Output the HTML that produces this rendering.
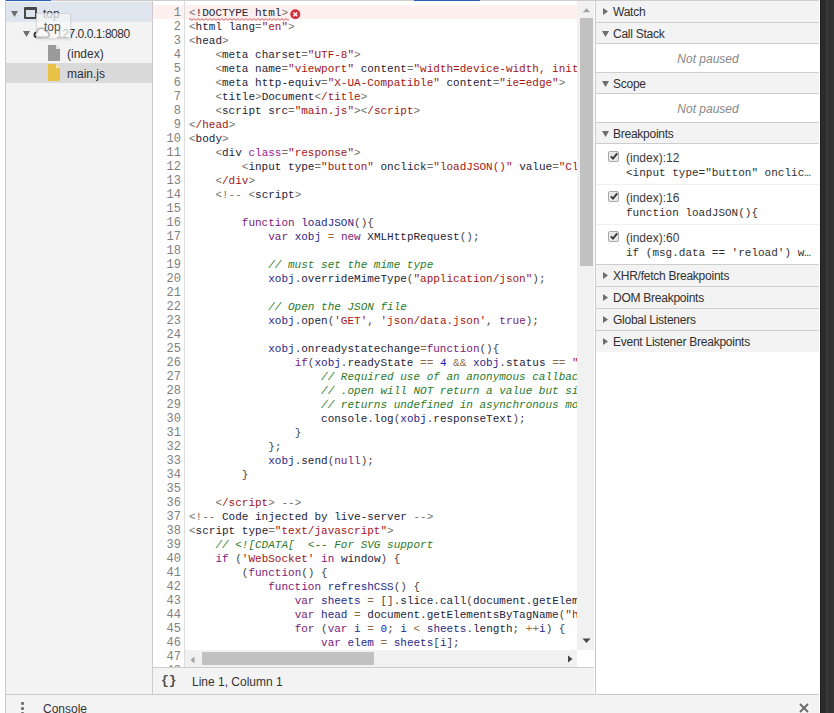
<!DOCTYPE html>
<html><head><meta charset="utf-8"><style>
html,body{margin:0;padding:0;}
body{width:834px;height:713px;overflow:hidden;position:relative;background:#fff;font-family:"Liberation Sans",sans-serif;font-size:12px;color:#222;}
.abs{position:absolute;}
.ui{position:absolute;white-space:nowrap;font-family:"Liberation Sans",sans-serif;font-size:12px;color:#303030;line-height:14px;}
/* code */
#editor{position:absolute;left:153px;top:1px;width:427px;height:666px;overflow:hidden;background:#fff;}
.cl{position:absolute;left:36px;height:14px;line-height:14px;white-space:pre;font-family:"Liberation Mono",monospace;font-size:11px;color:#222;}
.gn{position:absolute;left:0;width:28px;text-align:right;height:14px;line-height:14px;font-family:"Liberation Mono",monospace;font-size:12px;color:#808080;}
.b{color:#6f6f68}
.t{color:#24243a}
.s{color:#a31515}
.r{color:#a31515}
.p{color:#9b1b8f}
.k{color:#7b1a7b}
.c{color:#2a7a2a;font-style:italic}
.v{color:#27278a}
.o{color:#8f6a45}
.j{color:#444}
.n{color:#1c1ccf}
.tri-r{position:absolute;width:5px;height:7px;background:#6e6e6e;clip-path:polygon(0 0,100% 50%,0 100%);}
.tri-d{position:absolute;width:7px;height:6px;background:#6e6e6e;clip-path:polygon(0 0,100% 0,50% 100%);}
.hdr{position:absolute;left:596px;width:224px;height:21px;background:#f3f3f3;border-bottom:1px solid #cdcdcd;}
.hdr .ui{left:17px;top:4px;letter-spacing:-0.25px;}
.np{position:absolute;left:596px;width:224px;text-align:center;font-style:italic;color:#888;}

</style></head><body>
<!-- left white strip and border -->
<div class="abs" style="left:5px;top:0;width:1px;height:713px;background:#cbcbcb"></div>
<!-- navigator -->
<div class="abs" style="left:6px;top:1px;width:146px;height:693px;background:#f3f3f3"></div>
<div class="abs" style="left:152px;top:0;width:1px;height:694px;background:#cbcbcb"></div>
<div class="abs" style="left:6px;top:2px;width:146px;height:20px;background:#dfe5ee"></div>
<div class="abs" style="left:6px;top:63px;width:146px;height:20px;background:#dadada"></div>
<div class="tri-d" style="left:11px;top:11px"></div>
<div class="abs" style="left:24px;top:7px;width:9px;height:7px;border:2px solid #474747;border-top-width:3px;border-radius:1px"></div>
<div class="ui" style="left:43px;top:7px">top</div>
<div class="tri-d" style="left:23px;top:31px"></div>
<svg class="abs" style="left:32px;top:25px" width="20" height="14" viewBox="0 0 20 14"><path d="M5 12.3 C1.8 12.3 1.5 7.6 4.8 7.3 C5.5 2.5 12 1.5 13.5 5.8 C17.5 5.8 18.5 12.3 15 12.3 Z" fill="none" stroke="#333" stroke-width="1.8"/></svg>
<div class="ui" style="left:56px;top:27px;letter-spacing:-0.45px">127.0.0.1:8080</div>
<svg class="abs" style="left:48px;top:45px" width="12" height="16" viewBox="0 0 12 16"><path d="M0 0 H8 L12 4 V16 H0 Z" fill="#9a9a9a"/><path d="M8 0 V4 H12 Z" fill="#e8e8e8"/></svg>
<div class="ui" style="left:67px;top:47px">(index)</div>
<svg class="abs" style="left:48px;top:64px" width="12" height="17" viewBox="0 0 12 17"><path d="M0 0 H8 L12 4 V17 H0 Z" fill="#e9c348"/><path d="M8 0 V4 H12 Z" fill="#f6e9b8"/></svg>
<div class="ui" style="left:67px;top:67px">main.js</div>
<!-- tooltip -->
<div class="abs" style="left:36px;top:13px;width:33px;height:24px;background:rgba(248,248,248,0.7);border:1px solid rgba(180,180,180,0.45);box-shadow:0 1px 2px rgba(0,0,0,0.08)"></div>
<div class="ui" style="left:44px;top:20px;color:#505050">top</div>

<!-- top line -->
<div class="abs" style="left:6px;top:0;width:814px;height:1px;background:#cdcdcd"></div>
<div class="abs" style="left:6px;top:0;width:45px;height:1px;background:#2f5fb8"></div>
<div class="abs" style="left:414px;top:0;width:66px;height:1px;background:#2f5fb8"></div>

<!-- editor -->
<div id="editor">
<div class="abs" style="left:0;top:4px;width:427px;height:14px;background:#fff0f0"></div>
<div class="abs" style="left:31px;top:0;width:1px;height:666px;background:#dcdcdc"></div>
<div class="gn" style="top:5px">1</div>
<div class="gn" style="top:19px">2</div>
<div class="gn" style="top:33px">3</div>
<div class="gn" style="top:47px">4</div>
<div class="gn" style="top:61px">5</div>
<div class="gn" style="top:75px">6</div>
<div class="gn" style="top:89px">7</div>
<div class="gn" style="top:103px">8</div>
<div class="gn" style="top:117px">9</div>
<div class="gn" style="top:131px">10</div>
<div class="gn" style="top:145px">11</div>
<div class="gn" style="top:159px">12</div>
<div class="gn" style="top:173px">13</div>
<div class="gn" style="top:187px">14</div>
<div class="gn" style="top:201px">15</div>
<div class="gn" style="top:215px">16</div>
<div class="gn" style="top:229px">17</div>
<div class="gn" style="top:243px">18</div>
<div class="gn" style="top:257px">19</div>
<div class="gn" style="top:271px">20</div>
<div class="gn" style="top:285px">21</div>
<div class="gn" style="top:299px">22</div>
<div class="gn" style="top:313px">23</div>
<div class="gn" style="top:327px">24</div>
<div class="gn" style="top:341px">25</div>
<div class="gn" style="top:355px">26</div>
<div class="gn" style="top:369px">27</div>
<div class="gn" style="top:383px">28</div>
<div class="gn" style="top:397px">29</div>
<div class="gn" style="top:411px">30</div>
<div class="gn" style="top:425px">31</div>
<div class="gn" style="top:439px">32</div>
<div class="gn" style="top:453px">33</div>
<div class="gn" style="top:467px">34</div>
<div class="gn" style="top:481px">35</div>
<div class="gn" style="top:495px">36</div>
<div class="gn" style="top:509px">37</div>
<div class="gn" style="top:523px">38</div>
<div class="gn" style="top:537px">39</div>
<div class="gn" style="top:551px">40</div>
<div class="gn" style="top:565px">41</div>
<div class="gn" style="top:579px">42</div>
<div class="gn" style="top:593px">43</div>
<div class="gn" style="top:607px">44</div>
<div class="gn" style="top:621px">45</div>
<div class="gn" style="top:635px">46</div>
<div class="gn" style="top:649px">47</div>
<div class="gn" style="top:663px">48</div>
<div class="cl" style="top:5px"><span class="b">&lt;</span><span class="t">!DOCTYPE html</span><span class="b">&gt;</span></div>
<div class="cl" style="top:19px"><span class="b">&lt;</span><span class="t">html</span> <span class="t">lang</span><span class="b">=</span><span class="s">&quot;en&quot;</span><span class="b">&gt;</span></div>
<div class="cl" style="top:33px"><span class="b">&lt;</span><span class="t">head</span><span class="b">&gt;</span></div>
<div class="cl" style="top:47px">    <span class="b">&lt;</span><span class="t">meta</span> <span class="t">charset</span><span class="b">=</span><span class="s">&quot;UTF-8&quot;</span><span class="b">&gt;</span></div>
<div class="cl" style="top:61px">    <span class="b">&lt;</span><span class="t">meta</span> <span class="t">name</span><span class="b">=</span><span class="s">&quot;viewport&quot;</span> <span class="t">content</span><span class="b">=</span><span class="s">&quot;width=device-width, initial-scale=1.0&quot;</span><span class="b">&gt;</span></div>
<div class="cl" style="top:75px">    <span class="b">&lt;</span><span class="t">meta</span> <span class="t">http-equiv</span><span class="b">=</span><span class="s">&quot;X-UA-Compatible&quot;</span> <span class="t">content</span><span class="b">=</span><span class="s">&quot;ie=edge&quot;</span><span class="b">&gt;</span></div>
<div class="cl" style="top:89px">    <span class="b">&lt;</span><span class="t">title</span><span class="b">&gt;</span><span class="t">Document</span><span class="b">&lt;</span><span class="r">/title</span><span class="b">&gt;</span></div>
<div class="cl" style="top:103px">    <span class="b">&lt;</span><span class="t">script</span> <span class="t">src</span><span class="b">=</span><span class="s">&quot;main.js&quot;</span><span class="b">&gt;&lt;</span><span class="r">/script</span><span class="b">&gt;</span></div>
<div class="cl" style="top:117px"><span class="b">&lt;</span><span class="r">/head</span><span class="b">&gt;</span></div>
<div class="cl" style="top:131px"><span class="b">&lt;</span><span class="t">body</span><span class="b">&gt;</span></div>
<div class="cl" style="top:145px">    <span class="b">&lt;</span><span class="t">div</span> <span class="p">class</span><span class="b">=</span><span class="s">&quot;response&quot;</span><span class="b">&gt;</span></div>
<div class="cl" style="top:159px">        <span class="b">&lt;</span><span class="t">input</span> <span class="t">type</span><span class="b">=</span><span class="s">&quot;button&quot;</span> <span class="t">onclick</span><span class="b">=</span><span class="s">&quot;loadJSON()&quot;</span> <span class="t">value</span><span class="b">=</span><span class="s">&quot;Click me&quot;</span><span class="b">&gt;</span></div>
<div class="cl" style="top:173px">    <span class="b">&lt;</span><span class="r">/div</span><span class="b">&gt;</span></div>
<div class="cl" style="top:187px">    <span class="b">&lt;!--</span> <span class="b">&lt;</span><span class="t">script</span><span class="b">&gt;</span></div>
<div class="cl" style="top:201px"></div>
<div class="cl" style="top:215px">        <span class="k">function</span> <span class="v">loadJSON</span><span class="j">(){</span></div>
<div class="cl" style="top:229px">            <span class="k">var</span> <span class="v">xobj</span> <span class="o">=</span> <span class="k">new</span> <span class="t">XMLHttpRequest</span><span class="j">();</span></div>
<div class="cl" style="top:243px"></div>
<div class="cl" style="top:257px">            <span class="c">// must set the mime type</span></div>
<div class="cl" style="top:271px">            <span class="v">xobj</span><span class="j">.</span><span class="t">overrideMimeType</span><span class="j">(</span><span class="s">&quot;application/json&quot;</span><span class="j">);</span></div>
<div class="cl" style="top:285px"></div>
<div class="cl" style="top:299px">            <span class="c">// Open the JSON file</span></div>
<div class="cl" style="top:313px">            <span class="v">xobj</span><span class="j">.</span><span class="t">open</span><span class="j">(</span><span class="s">&#x27;GET&#x27;</span><span class="j">,</span> <span class="s">&#x27;json/data.json&#x27;</span><span class="j">,</span> <span class="k">true</span><span class="j">);</span></div>
<div class="cl" style="top:327px"></div>
<div class="cl" style="top:341px">            <span class="v">xobj</span><span class="j">.</span><span class="t">onreadystatechange</span><span class="o">=</span><span class="k">function</span><span class="j">(){</span></div>
<div class="cl" style="top:355px">                <span class="k">if</span><span class="j">(</span><span class="v">xobj</span><span class="j">.</span><span class="t">readyState</span> <span class="o">==</span> <span class="n">4</span> <span class="o">&amp;&amp;</span> <span class="v">xobj</span><span class="j">.</span><span class="t">status</span> <span class="o">==</span> <span class="s">&quot;200&quot;</span><span class="j">) {</span></div>
<div class="cl" style="top:369px">                    <span class="c">// Required use of an anonymous callback as .open will</span></div>
<div class="cl" style="top:383px">                    <span class="c">// .open will NOT return a value but simply returns</span></div>
<div class="cl" style="top:397px">                    <span class="c">// returns undefined in asynchronous mode</span></div>
<div class="cl" style="top:411px">                    <span class="t">console</span><span class="j">.</span><span class="t">log</span><span class="j">(</span><span class="v">xobj</span><span class="j">.</span><span class="t">responseText</span><span class="j">);</span></div>
<div class="cl" style="top:425px">                <span class="j">}</span></div>
<div class="cl" style="top:439px">            <span class="j">};</span></div>
<div class="cl" style="top:453px">            <span class="v">xobj</span><span class="j">.</span><span class="t">send</span><span class="j">(</span><span class="k">null</span><span class="j">);</span></div>
<div class="cl" style="top:467px">        <span class="j">}</span></div>
<div class="cl" style="top:481px"></div>
<div class="cl" style="top:495px">    <span class="b">&lt;</span><span class="r">/script</span><span class="b">&gt;</span> <span class="b">--&gt;</span></div>
<div class="cl" style="top:509px"><span class="b">&lt;!--</span> <span class="t">Code injected by live-server</span> <span class="b">--&gt;</span></div>
<div class="cl" style="top:523px"><span class="b">&lt;</span><span class="t">script</span> <span class="t">type</span><span class="b">=</span><span class="s">&quot;text/javascript&quot;</span><span class="b">&gt;</span></div>
<div class="cl" style="top:537px">    <span class="c">// &lt;![CDATA[  &lt;-- For SVG support</span></div>
<div class="cl" style="top:551px">    <span class="k">if</span> <span class="j">(</span><span class="s">&#x27;WebSocket&#x27;</span> <span class="k">in</span> <span class="t">window</span><span class="j">) {</span></div>
<div class="cl" style="top:565px">        <span class="j">(</span><span class="k">function</span><span class="j">() {</span></div>
<div class="cl" style="top:579px">            <span class="k">function</span> <span class="v">refreshCSS</span><span class="j">() {</span></div>
<div class="cl" style="top:593px">                <span class="k">var</span> <span class="v">sheets</span> <span class="o">=</span> <span class="j">[].</span><span class="t">slice</span><span class="j">.</span><span class="t">call</span><span class="j">(</span><span class="t">document</span><span class="j">.</span><span class="t">getElementsByTagName</span></div>
<div class="cl" style="top:607px">                <span class="k">var</span> <span class="v">head</span> <span class="o">=</span> <span class="t">document</span><span class="j">.</span><span class="t">getElementsByTagName</span><span class="j">(</span><span class="s">&quot;head&quot;</span></div>
<div class="cl" style="top:621px">                <span class="k">for</span> <span class="j">(</span><span class="k">var</span> <span class="v">i</span> <span class="o">=</span> <span class="n">0</span><span class="j">;</span> <span class="v">i</span> <span class="o">&lt;</span> <span class="v">sheets</span><span class="j">.</span><span class="t">length</span><span class="j">;</span> <span class="o">++</span><span class="v">i</span><span class="j">) {</span></div>
<div class="cl" style="top:635px">                    <span class="k">var</span> <span class="v">elem</span> <span class="o">=</span> <span class="v">sheets</span><span class="j">[</span><span class="v">i</span><span class="j">];</span></div>
<div class="cl" style="top:649px"></div>
<div class="cl" style="top:663px"></div>
<svg class="abs" style="left:36px;top:16px" width="100" height="5" viewBox="0 0 100 5"><path d="M0 2.5 Q1.0 0.8 2.0 2.5 Q3.0 4.2 4.0 2.5 Q5.0 0.8 6.0 2.5 Q7.0 4.2 8.0 2.5 Q9.0 0.8 10.0 2.5 Q11.0 4.2 12.0 2.5 Q13.0 0.8 14.0 2.5 Q15.0 4.2 16.0 2.5 Q17.0 0.8 18.0 2.5 Q19.0 4.2 20.0 2.5 Q21.0 0.8 22.0 2.5 Q23.0 4.2 24.0 2.5 Q25.0 0.8 26.0 2.5 Q27.0 4.2 28.0 2.5 Q29.0 0.8 30.0 2.5 Q31.0 4.2 32.0 2.5 Q33.0 0.8 34.0 2.5 Q35.0 4.2 36.0 2.5 Q37.0 0.8 38.0 2.5 Q39.0 4.2 40.0 2.5 Q41.0 0.8 42.0 2.5 Q43.0 4.2 44.0 2.5 Q45.0 0.8 46.0 2.5 Q47.0 4.2 48.0 2.5 Q49.0 0.8 50.0 2.5 Q51.0 4.2 52.0 2.5 Q53.0 0.8 54.0 2.5 Q55.0 4.2 56.0 2.5 Q57.0 0.8 58.0 2.5 Q59.0 4.2 60.0 2.5 Q61.0 0.8 62.0 2.5 Q63.0 4.2 64.0 2.5 Q65.0 0.8 66.0 2.5 Q67.0 4.2 68.0 2.5 Q69.0 0.8 70.0 2.5 Q71.0 4.2 72.0 2.5 Q73.0 0.8 74.0 2.5 Q75.0 4.2 76.0 2.5 Q77.0 0.8 78.0 2.5 Q79.0 4.2 80.0 2.5 Q81.0 0.8 82.0 2.5 Q83.0 4.2 84.0 2.5 Q85.0 0.8 86.0 2.5 Q87.0 4.2 88.0 2.5 Q89.0 0.8 90.0 2.5 Q91.0 4.2 92.0 2.5 Q93.0 0.8 94.0 2.5 Q95.0 4.2 96.0 2.5 Q97.0 0.8 98.0 2.5 Q99.0 4.2 100.0 2.5" fill="none" stroke="#e05555" stroke-width="1"/></svg>
<svg class="abs" style="left:137px;top:8px" width="11" height="11" viewBox="0 0 11 11"><circle cx="5.3" cy="5.3" r="5" fill="#d6303c"/><path d="M3.4 3.4 L7.2 7.2 M7.2 3.4 L3.4 7.2" stroke="#fff" stroke-width="1.4"/></svg>
<!-- horizontal scrollbar -->
<div class="abs" style="left:32px;top:649px;width:395px;height:17px;background:#f1f1f1"></div>
<div class="abs" style="left:49px;top:651px;width:172px;height:13px;background:#c1c1c1"></div>
<svg class="abs" style="left:37px;top:655px" width="5" height="8" viewBox="0 0 5 8"><path d="M4.5 0.5 V7.5 L0.5 4 Z" fill="#a3a3a3"/></svg>
<svg class="abs" style="left:415px;top:654px" width="5" height="8" viewBox="0 0 5 8"><path d="M0 0.5 V7.5 L4.5 4 Z" fill="#454545"/></svg>
</div>
<!-- vertical scrollbar -->
<div class="abs" style="left:577px;top:1px;width:17px;height:650px;background:#f1f1f1"></div>
<div class="abs" style="left:580px;top:18px;width:13px;height:248px;background:#c1c1c1"></div>
<svg class="abs" style="left:582px;top:8px" width="9" height="5" viewBox="0 0 9 5"><path d="M0.8 4.2 H8.2 L4.5 0.3 Z" fill="#a3a3a3"/></svg>
<svg class="abs" style="left:582px;top:638px" width="9" height="6" viewBox="0 0 9 6"><path d="M0.5 0.5 H8.5 L4.5 5 Z" fill="#454545"/></svg>
<div class="abs" style="left:577px;top:650px;width:17px;height:17px;background:#fff"></div>

<!-- status bar -->
<div class="abs" style="left:153px;top:667px;width:441px;height:1px;background:#cdcdcd"></div>
<div class="abs" style="left:153px;top:668px;width:441px;height:26px;background:#f3f3f3"></div>
<div class="ui" style="left:161px;top:674px;font-family:'Liberation Mono',monospace;font-weight:bold;font-size:13px;color:#4d4d4d">{}</div>
<div class="ui" style="left:192px;top:675px;color:#333">Line 1, Column 1</div>

<!-- sidebar -->
<div class="abs" style="left:595px;top:0;width:1px;height:694px;background:#cbcbcb"></div>
<div class="hdr" style="top:1px"><div class="tri-r" style="left:7px;top:7px"></div><div class="ui">Watch</div></div>
<div class="hdr" style="top:23px;height:20px"><div class="tri-d" style="left:6px;top:8px"></div><div class="ui" style="top:4px">Call Stack</div></div>
<div class="ui np" style="top:52px">Not paused</div>
<div class="abs" style="left:596px;top:72px;width:224px;height:1px;background:#cdcdcd"></div>
<div class="hdr" style="top:73px;height:20px"><div class="tri-d" style="left:6px;top:8px"></div><div class="ui" style="top:4px">Scope</div></div>
<div class="ui np" style="top:102px">Not paused</div>
<div class="abs" style="left:596px;top:122px;width:224px;height:1px;background:#cdcdcd"></div>
<div class="hdr" style="top:123px;height:20px"><div class="tri-d" style="left:6px;top:8px"></div><div class="ui" style="top:4px">Breakpoints</div></div>

<!-- breakpoints items -->
<div class="abs" style="left:608px;top:151px;width:9px;height:9px;border:1px solid #a8a8a8;border-radius:2px;background:#e9e9e9"></div>
<svg class="abs" style="left:609px;top:151px" width="10" height="10" viewBox="0 0 10 10"><path d="M1.8 5.4 L4 7.6 L8.2 2.4" fill="none" stroke="#3a3a3a" stroke-width="2"/></svg>
<div class="ui" style="left:626px;top:151px;color:#3a3a3a">(index):12</div>
<div class="ui" style="left:626px;top:165px;font-family:'Liberation Mono',monospace;font-size:11px;line-height:17px">&lt;input type="button" onclic…</div>
<div class="abs" style="left:596px;top:184px;width:224px;height:1px;background:#efefef"></div>
<div class="abs" style="left:608px;top:191px;width:9px;height:9px;border:1px solid #a8a8a8;border-radius:2px;background:#e9e9e9"></div>
<svg class="abs" style="left:609px;top:191px" width="10" height="10" viewBox="0 0 10 10"><path d="M1.8 5.4 L4 7.6 L8.2 2.4" fill="none" stroke="#3a3a3a" stroke-width="2"/></svg>
<div class="ui" style="left:626px;top:191px;color:#3a3a3a">(index):16</div>
<div class="ui" style="left:626px;top:205px;font-family:'Liberation Mono',monospace;font-size:11px;line-height:17px">function loadJSON(){</div>
<div class="abs" style="left:596px;top:224px;width:224px;height:1px;background:#efefef"></div>
<div class="abs" style="left:608px;top:231px;width:9px;height:9px;border:1px solid #a8a8a8;border-radius:2px;background:#e9e9e9"></div>
<svg class="abs" style="left:609px;top:231px" width="10" height="10" viewBox="0 0 10 10"><path d="M1.8 5.4 L4 7.6 L8.2 2.4" fill="none" stroke="#3a3a3a" stroke-width="2"/></svg>
<div class="ui" style="left:626px;top:231px;color:#3a3a3a">(index):60</div>
<div class="ui" style="left:626px;top:245px;font-family:'Liberation Mono',monospace;font-size:11px;line-height:17px">if (msg.data == 'reload') w…</div>
<div class="abs" style="left:596px;top:264px;width:224px;height:1px;background:#cdcdcd"></div>
<div class="hdr" style="top:265px"><div class="tri-r" style="left:7px;top:7px"></div><div class="ui">XHR/fetch Breakpoints</div></div>
<div class="hdr" style="top:287px"><div class="tri-r" style="left:7px;top:7px"></div><div class="ui">DOM Breakpoints</div></div>
<div class="hdr" style="top:309px"><div class="tri-r" style="left:7px;top:7px"></div><div class="ui">Global Listeners</div></div>
<div class="hdr" style="top:331px;border-bottom:none"><div class="tri-r" style="left:7px;top:7px"></div><div class="ui">Event Listener Breakpoints</div></div>

<!-- drawer -->
<div class="abs" style="left:6px;top:694px;width:814px;height:1px;background:#cbcbcb"></div>
<div class="abs" style="left:6px;top:695px;width:814px;height:18px;background:#f3f3f3"></div>
<div class="abs" style="left:21px;top:702px;width:3px;height:3px;border-radius:1px;background:#707070"></div>
<div class="abs" style="left:21px;top:707px;width:3px;height:3px;border-radius:1px;background:#707070"></div>
<div class="abs" style="left:21px;top:712px;width:3px;height:3px;border-radius:1px;background:#707070"></div>
<div class="ui" style="left:43px;top:702px;color:#333">Console</div>
<svg class="abs" style="left:799px;top:703px" width="10" height="10" viewBox="0 0 10 10"><path d="M1 1 L9 9 M9 1 L1 9" stroke="#6a6a6a" stroke-width="1.8"/></svg>

<!-- dark right strip -->
<div class="abs" style="left:819px;top:0;width:1px;height:713px;background:#fdfdfd"></div>
<div class="abs" style="left:820px;top:0;width:14px;height:713px;background:#2b2b2b"></div>
<div class="abs" style="left:820px;top:0;width:1px;height:713px;background:#1f1f1f"></div>
<div class="abs" style="left:826px;top:0;width:1px;height:713px;background:#3c3c3c"></div>
<div class="abs" style="left:827px;top:0;width:7px;height:713px;background:#333333"></div>

</body></html>
